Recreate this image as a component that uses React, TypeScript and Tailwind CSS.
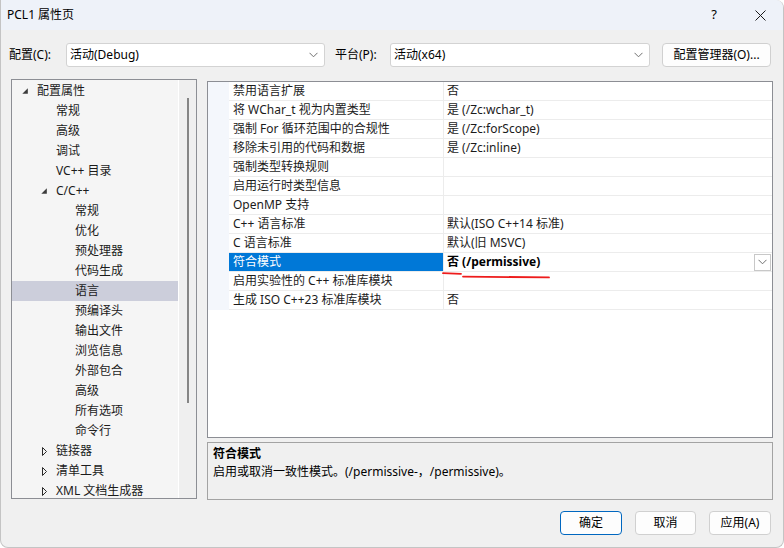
import React from "react";

type TreeItem = { label: string; level: 1 | 2 | 3; tri?: "open" | "closed"; selected?: boolean };

const treeItems: TreeItem[] = [
  { label: "配置属性", level: 1, tri: "open" },
  { label: "常规", level: 2 },
  { label: "高级", level: 2 },
  { label: "调试", level: 2 },
  { label: "VC++ 目录", level: 2 },
  { label: "C/C++", level: 2, tri: "open" },
  { label: "常规", level: 3 },
  { label: "优化", level: 3 },
  { label: "预处理器", level: 3 },
  { label: "代码生成", level: 3 },
  { label: "语言", level: 3, selected: true },
  { label: "预编译头", level: 3 },
  { label: "输出文件", level: 3 },
  { label: "浏览信息", level: 3 },
  { label: "外部包合", level: 3 },
  { label: "高级", level: 3 },
  { label: "所有选项", level: 3 },
  { label: "命令行", level: 3 },
  { label: "链接器", level: 2, tri: "closed" },
  { label: "清单工具", level: 2, tri: "closed" },
  { label: "XML 文档生成器", level: 2, tri: "closed" },
];

const spacer: Record<number, string> = {
  1: "w-[9px]",
  2: "w-[28px]",
  3: "w-[47px]",
};

const props: { name: string; value: string; selected?: boolean }[] = [
  { name: "禁用语言扩展", value: "否" },
  { name: "将 WChar_t 视为内置类型", value: "是 (/Zc:wchar_t)" },
  { name: "强制 For 循环范围中的合规性", value: "是 (/Zc:forScope)" },
  { name: "移除未引用的代码和数据", value: "是 (/Zc:inline)" },
  { name: "强制类型转换规则", value: "" },
  { name: "启用运行时类型信息", value: "" },
  { name: "OpenMP 支持", value: "" },
  { name: "C++ 语言标准", value: "默认(ISO C++14 标准)" },
  { name: "C 语言标准", value: "默认(旧 MSVC)" },
  { name: "符合模式", value: "否 (/permissive)", selected: true },
  { name: "启用实验性的 C++ 标准库模块", value: "" },
  { name: "生成 ISO C++23 标准库模块", value: "否" },
];

function Chevron() {
  return (
    <svg width="9" height="6" viewBox="0 0 9 6" className="shrink-0">
      <path d="M0.5 0.8 L4.5 4.8 L8.5 0.8" fill="none" stroke="#707070" strokeWidth="1" />
    </svg>
  );
}

function Tri({ kind }: { kind?: "open" | "closed" }) {
  return (
    <div className="w-[16px] h-[20px] shrink-0">
      {kind === "open" && (
        <svg width="16" height="20" viewBox="0 0 16 20">
          <polygon points="6.8,7.3 6.8,12.8 1.3,12.8" fill="#3c3c3c" />
        </svg>
      )}
      {kind === "closed" && (
        <svg width="16" height="20" viewBox="0 0 16 20">
          <polygon points="2.5,6.5 6.5,10.5 2.5,14.5" fill="none" stroke="#2a2a2a" strokeWidth="1" />
        </svg>
      )}
    </div>
  );
}

export default function App() {
  return (
    <div className="relative w-[784px] h-[548px] overflow-hidden bg-[#f0f0f0] text-[12px] text-[#1b1b1b] font-['Noto_Sans','Noto_Sans_CJK_SC',sans-serif] rounded-tr-[8px] rounded-b-[8px] border-x border-b border-[#c4c4c4]">
      {/* Title bar */}
      <div className="h-[30px] bg-[#eef2f9] flex items-center">
        <div className="pl-[6px] text-[12px] text-black leading-[30px]">PCL1 属性页</div>
        <div className="ml-auto flex h-full">
          <div className="w-[46px] flex items-center justify-center text-[13px] text-black">?</div>
          <div className="w-[46px] flex items-center justify-center">
            <svg width="11" height="11" viewBox="0 0 11 11">
              <path d="M0.5 0.5 L10.5 10.5 M10.5 0.5 L0.5 10.5" stroke="#1a1a1a" strokeWidth="1" />
            </svg>
          </div>
        </div>
      </div>

      {/* Config row */}
      <div className="mt-[12px] h-[25px] flex items-center">
        <div className="pl-[8px] w-[65px] shrink-0 text-black">配置(C):</div>
        <div className="w-[259px] h-[24px] bg-white border border-[#d3d3d3] rounded-[3px] flex items-center pl-[3px] pr-[6px]">
          <span className="flex-1 text-black">活动(Debug)</span>
          <Chevron />
        </div>
        <div className="ml-[10px] w-[55px] shrink-0 text-black">平台(P):</div>
        <div className="w-[260px] h-[24px] bg-white border border-[#d3d3d3] rounded-[3px] flex items-center pl-[3px] pr-[6px]">
          <span className="flex-1 text-black">活动(x64)</span>
          <Chevron />
        </div>
        <div className="ml-[12px] w-[109px] h-[24px] bg-[#fdfdfd] border border-[#d0d0d0] rounded-[4px] flex items-center justify-center text-black">
          配置管理器(O)...
        </div>
      </div>

      {/* Main area */}
      <div className="mt-[12px] flex">
        {/* Tree */}
        <div className="ml-[10px] w-[186px] h-[420px] border border-[#8c8e94] bg-[#f5f5f5] flex overflow-hidden">
          <div className="w-[166px] pt-[1px] overflow-hidden">
            {treeItems.map((it, i) => (
              <div
                key={i}
                className={
                  "h-[20px] flex items-center whitespace-nowrap " +
                  (it.selected ? "bg-[#cccedb]" : "")
                }
              >
                <div className={spacer[it.level] + " shrink-0"} />
                <Tri kind={it.tri} />
                <span className="leading-[20px]">{it.label}</span>
              </div>
            ))}
          </div>
          <div className="w-[1px] bg-white" />
          <div className="flex-1 bg-[#efefef] flex justify-center pt-[18px]">
            <div className="w-[2px] h-[305px] bg-[#858585] ml-[1px]" />
          </div>
        </div>

        {/* Right column */}
        <div className="ml-[10px] w-[566px] flex flex-col">
          <div className="mt-[2px] h-[357px] border border-[#8c8e94] bg-white">
            {props.map((p, i) => (
              <div key={i} className="h-[19px] flex">
                <div className="w-[21px] shrink-0 bg-[#f4f7fc]" />
                <div
                  className={
                    "w-[215px] shrink-0 border-b border-r border-[#ececec] pl-[4px] leading-[18px] whitespace-nowrap " +
                    (p.selected ? "bg-[#0078d7] text-white" : "")
                  }
                >
                  {p.name}
                </div>
                <div className="flex-1 border-b border-[#ececec] pl-[3px] flex items-center whitespace-nowrap">
                  <span className={"flex-1 leading-[18px] " + (p.selected ? "font-bold text-black" : "")}>{p.value}</span>
                  {p.selected && (
                    <div className="w-[17px] h-[17px] mr-[1px] border border-[#c8c8c8] bg-white flex items-center justify-center">
                      <Chevron />
                    </div>
                  )}
                </div>
              </div>
            ))}
          </div>
          <div className="mt-[4px] h-[58px] border border-[#a3a3a3] bg-[#f0f0f0] pl-[5px] pt-[2px]">
            <div className="font-bold leading-[18px] text-black">符合模式</div>
            <div className="leading-[18px] text-black">启用或取消一致性模式。(/permissive-，/permissive)。</div>
          </div>
        </div>
      </div>

      {/* Buttons */}
      <div className="mt-[11px] flex justify-end pr-[12px] gap-[13px]">
        <div className="w-[62px] h-[24px] border border-[#0067c0] rounded-[4px] bg-[#fdfdfd] flex items-center justify-center text-black">确定</div>
        <div className="w-[61px] h-[24px] border border-[#d0d0d0] rounded-[4px] bg-[#fdfdfd] flex items-center justify-center text-black">取消</div>
        <div className="w-[62px] h-[24px] border border-[#d0d0d0] rounded-[4px] bg-[#fdfdfd] flex items-center justify-center text-black">应用(A)</div>
      </div>

      {/* Red annotation underline */}
      <svg className="absolute left-0 top-0 pointer-events-none" width="784" height="548" viewBox="0 0 784 548">
        <path d="M442 273.2 L460 273.8" stroke="#ee1c1c" strokeWidth="1.8" fill="none" strokeLinecap="round" />
        <path d="M462 276.6 L548 277.4" stroke="#ee1c1c" strokeWidth="1.8" fill="none" strokeLinecap="round" />
      </svg>
    </div>
  );
}
